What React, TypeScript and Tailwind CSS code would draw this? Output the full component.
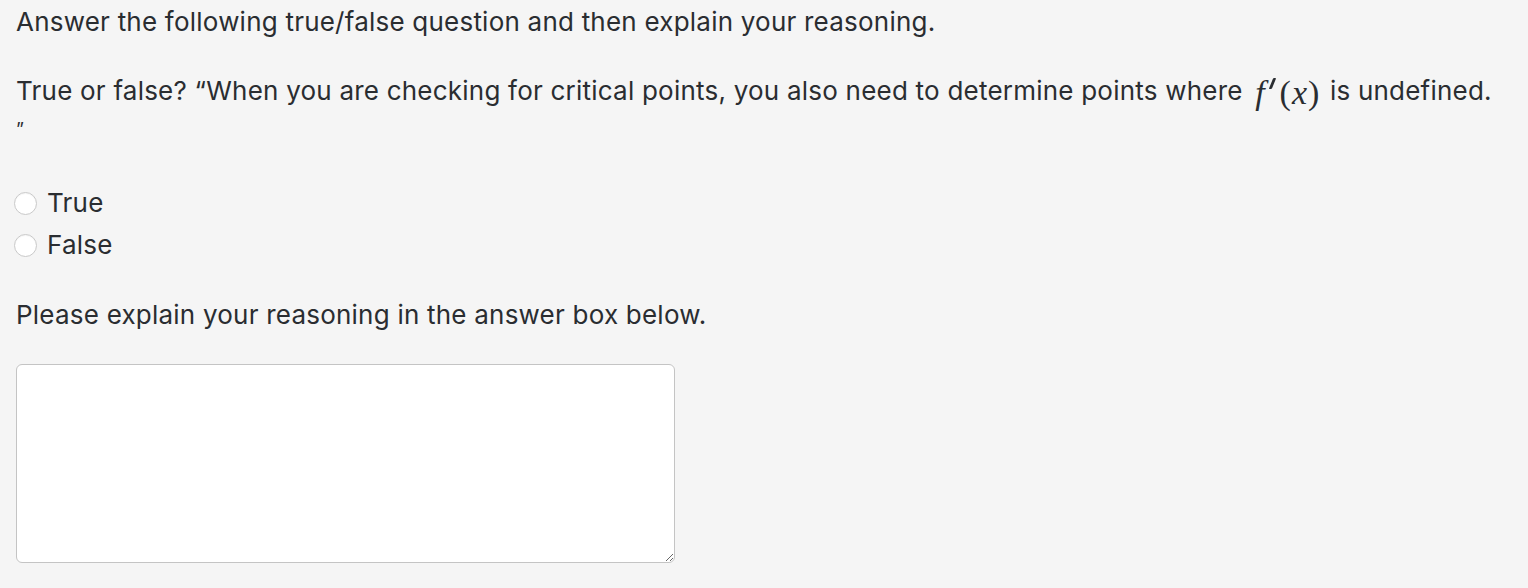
export default function App() {
  return (
    <div
      className="min-h-[588px] w-full bg-[#f5f5f5] px-4 text-[26px] leading-[36px] tracking-[0.22px] text-[#2a2d31]"
      style={{ fontFamily: "Inter, 'Noto Sans', sans-serif" }}
    >
      <p className="pt-[4px]">Answer the following true/false question and then explain your reasoning.</p>

      <p className="mt-[33px]">
        True or false? “When you are checking for critical points, you also need to determine points where{" "}
        <span className="ml-[5px] mr-[3px] inline-flex h-[30px] items-baseline align-[-4px] leading-[30px] font-['Liberation_Serif',serif] text-[34px] tracking-normal">
          <i>f</i>
          {/* prime mark */}
          <span className="relative -top-[15px] ml-[6px] inline-block h-[11px] w-[3px] skew-x-[-22deg] rounded-[1px] bg-[#2a2d31]" />
          <span className="ml-[6px]">(</span>
          <i className="mx-[1px]">x</i>
          <span>)</span>
        </span>{" "}
        is undefined.
        <br />
        <span className="text-[18px]">”</span>
      </p>

      <div className="mt-[37px] flex flex-col gap-[6px]">
        {["True", "False"].map((label) => (
          <label key={label} className="-ml-[2px] flex items-center gap-[10px]">
            <span className="h-[23px] w-[23px] shrink-0 rounded-full border border-[#c9c9c9] bg-white shadow-[inset_0_1px_1px_rgba(0,0,0,0.04)]" />
            <span>{label}</span>
          </label>
        ))}
      </div>

      <p className="mt-[34px]">Please explain your reasoning in the answer box below.</p>

      <div className="mt-[31px] pb-[26px]">
        <textarea className="block h-[199px] w-[659px] resize rounded-[6px] border border-[#c4c4c4] bg-white outline-none" />
      </div>
    </div>
  )
}
